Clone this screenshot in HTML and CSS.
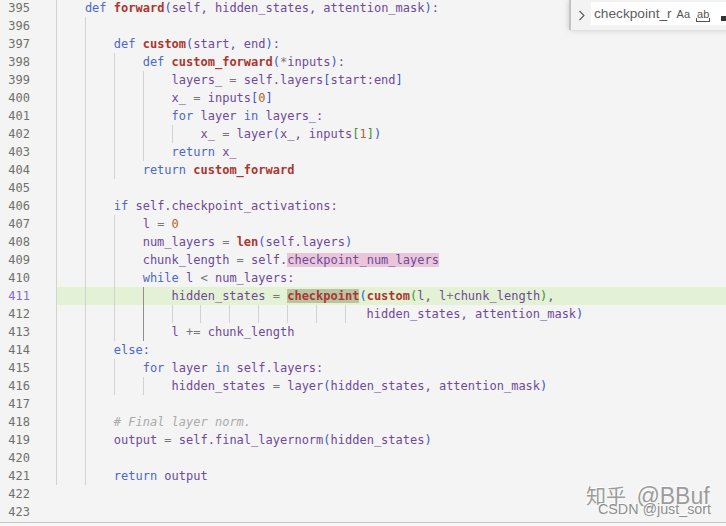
FILE: index.html
```html
<!DOCTYPE html>
<html lang="en">
<head>
<meta charset="utf-8">
<title>forward - editor</title>
<link rel="stylesheet" href="styles.css">
</head>
<body>
<div class="editor">
  <div class="lines">
    <div class="line"><span class="ln">395</span><span class="code"><i class="ig"></i><span class="k">def</span> <span class="f">forward</span><span class="b1">(</span>self, hidden_states, attention_mask<span class="b1">)</span>:</span></div>
    <div class="line"><span class="ln">396</span><span class="code"><i class="ig"></i><i class="ig"></i></span></div>
    <div class="line"><span class="ln">397</span><span class="code"><i class="ig"></i><i class="ig"></i><span class="k">def</span> <span class="f">custom</span><span class="b1">(</span>start, end<span class="b1">)</span>:</span></div>
    <div class="line"><span class="ln">398</span><span class="code"><i class="ig"></i><i class="ig"></i><i class="ig"></i><span class="k">def</span> <span class="f">custom_forward</span><span class="b1">(</span><span class="o">*</span>inputs<span class="b1">)</span>:</span></div>
    <div class="line"><span class="ln">399</span><span class="code"><i class="ig"></i><i class="ig"></i><i class="ig"></i><i class="ig"></i>layers_ <span class="o">=</span> self.layers<span class="b1">[</span>start:end<span class="b1">]</span></span></div>
    <div class="line"><span class="ln">400</span><span class="code"><i class="ig"></i><i class="ig"></i><i class="ig"></i><i class="ig"></i>x_ <span class="o">=</span> inputs<span class="b1">[</span><span class="n">0</span><span class="b1">]</span></span></div>
    <div class="line"><span class="ln">401</span><span class="code"><i class="ig"></i><i class="ig"></i><i class="ig"></i><i class="ig"></i><span class="k">for</span> layer <span class="k">in</span> layers_:</span></div>
    <div class="line"><span class="ln">402</span><span class="code"><i class="ig"></i><i class="ig"></i><i class="ig"></i><i class="ig"></i><i class="ig"></i>x_ <span class="o">=</span> layer<span class="b1">(</span>x_, inputs<span class="b2">[</span><span class="n">1</span><span class="b2">]</span><span class="b1">)</span></span></div>
    <div class="line"><span class="ln">403</span><span class="code"><i class="ig"></i><i class="ig"></i><i class="ig"></i><i class="ig"></i><span class="k">return</span> x_</span></div>
    <div class="line"><span class="ln">404</span><span class="code"><i class="ig"></i><i class="ig"></i><i class="ig"></i><span class="k">return</span> <span class="f">custom_forward</span></span></div>
    <div class="line"><span class="ln">405</span><span class="code"><i class="ig"></i><i class="ig"></i></span></div>
    <div class="line"><span class="ln">406</span><span class="code"><i class="ig"></i><i class="ig"></i><span class="k">if</span> self.checkpoint_activations:</span></div>
    <div class="line"><span class="ln">407</span><span class="code"><i class="ig"></i><i class="ig"></i><i class="ig"></i>l <span class="o">=</span> <span class="n">0</span></span></div>
    <div class="line"><span class="ln">408</span><span class="code"><i class="ig"></i><i class="ig"></i><i class="ig"></i>num_layers <span class="o">=</span> <span class="f">len</span><span class="b1">(</span>self.layers<span class="b1">)</span></span></div>
    <div class="line"><span class="ln">409</span><span class="code"><i class="ig"></i><i class="ig"></i><i class="ig"></i>chunk_length <span class="o">=</span> self.<span class="match">checkpoint_num_layers</span></span></div>
    <div class="line"><span class="ln">410</span><span class="code"><i class="ig"></i><i class="ig"></i><i class="ig"></i><span class="k">while</span> l <span class="o">&lt;</span> num_layers:</span></div>
    <div class="line cur"><span class="ln">411</span><span class="code"><i class="ig"></i><i class="ig"></i><i class="ig"></i><i class="ig act"></i>hidden_states <span class="o">=</span> <span class="f cur-match">checkpoint</span><span class="b1">(</span><span class="f">custom</span><span class="b2">(</span>l, l<span class="o">+</span>chunk_length<span class="b2">)</span>,</span></div>
    <div class="line"><span class="ln">412</span><span class="code"><i class="ig"></i><i class="ig"></i><i class="ig"></i><i class="ig act"></i><i class="ig"></i><i class="ig"></i><i class="ig"></i><i class="ig"></i><i class="ig"></i><i class="ig"></i><i class="ig ig3"></i>hidden_states, attention_mask<span class="b1">)</span></span></div>
    <div class="line"><span class="ln">413</span><span class="code"><i class="ig"></i><i class="ig"></i><i class="ig"></i><i class="ig act"></i>l <span class="o">+=</span> chunk_length</span></div>
    <div class="line"><span class="ln">414</span><span class="code"><i class="ig"></i><i class="ig"></i><span class="k">else</span>:</span></div>
    <div class="line"><span class="ln">415</span><span class="code"><i class="ig"></i><i class="ig"></i><i class="ig"></i><span class="k">for</span> layer <span class="k">in</span> self.layers:</span></div>
    <div class="line"><span class="ln">416</span><span class="code"><i class="ig"></i><i class="ig"></i><i class="ig"></i><i class="ig"></i>hidden_states <span class="o">=</span> layer<span class="b1">(</span>hidden_states, attention_mask<span class="b1">)</span></span></div>
    <div class="line"><span class="ln">417</span><span class="code"><i class="ig"></i><i class="ig"></i></span></div>
    <div class="line"><span class="ln">418</span><span class="code"><i class="ig"></i><i class="ig"></i><span class="c"># Final layer norm.</span></span></div>
    <div class="line"><span class="ln">419</span><span class="code"><i class="ig"></i><i class="ig"></i>output <span class="o">=</span> self.final_layernorm<span class="b1">(</span>hidden_states<span class="b1">)</span></span></div>
    <div class="line"><span class="ln">420</span><span class="code"><i class="ig"></i><i class="ig"></i></span></div>
    <div class="line"><span class="ln">421</span><span class="code"><i class="ig"></i><i class="ig"></i><span class="k">return</span> output</span></div>
    <div class="line"><span class="ln">422</span><span class="code"></span></div>
    <div class="line"><span class="ln">423</span><span class="code"></span></div>
  </div>

  <div class="find">
    <span class="toggle"><svg width="10" height="14" viewBox="0 0 10 14"><path d="M2.5 3 L7 7.5 L2.5 12" fill="none" stroke="#5a5a5a" stroke-width="1.1"/></svg></span>
    <div class="find-input">
      <span class="query">checkpoint_r</span>
      <span class="opt case">Aa</span>
      <span class="opt word">ab</span>
      <span class="opt regex"></span>
    </div>
  </div>

  <div class="wm wm-zh"><span class="wm-cjk">知乎</span> @BBuf</div>
  <div class="wm wm-csdn">CSDN @just_sort</div>
</div>
</body>
</html>
```

FILE: styles.css
```css
body {
  margin: 0;
  width: 726px;
  height: 526px;
  overflow: hidden;
  background: #f8f8f8;
}

.editor {
  position: relative;
  height: 522px;
  overflow: hidden;
  background: #f4f4f4;
  border-bottom: 1px solid #c6c6c6;
}

.lines {
  margin-top: -1px;
  font-family: "DejaVu Sans Mono", "Liberation Mono", monospace;
  font-size: 12px;
  line-height: 18px;
  color: #6f4a98;
}

.line {
  display: flex;
  height: 18px;
}

.ln {
  flex: none;
  width: 30px;
  margin-right: 26px;
  text-align: right;
  color: #6f706a;
}

.line.cur .ln {
  color: #8769cf;
}

.code {
  flex: 1;
  white-space: pre;
}

.line.cur .code {
  background: #e3f2d4;
}

.ig {
  display: inline-block;
  vertical-align: top;
  width: 4ch;
  height: 18px;
  box-sizing: border-box;
  border-left: 1px solid #d2d2d2;
}

.ig.ig3 {
  width: 3ch;
}

.ig.act {
  border-left-color: #8f8f8f;
}

.k { color: #4b69c6; }
.f { color: #aa3731; font-weight: bold; }
.o { color: #777777; }
.n { color: #b0652a; }
.c { color: #aaaaaa; font-style: italic; }
.b1 { color: #3459d0; }
.b2 { color: #3b9131; }

.match {
  background: #e9c6da;
}

.cur-match {
  background: #b8c4a2;
}

/* find widget */
.find {
  position: absolute;
  top: 0;
  left: 569px;
  right: -10px;
  height: 30px;
  display: flex;
  align-items: flex-start;
  background: #f3f3f3;
  border-left: 2px solid #c3c3c3;
  box-shadow: 0 0 6px rgba(0, 0, 0, 0.18);
  box-sizing: border-box;
}

.toggle {
  flex: none;
  width: 19px;
  height: 30px;
  display: flex;
  align-items: center;
  justify-content: center;
  padding-left: 1px;
}

.find-input {
  flex: 1;
  margin-top: 2px;
  height: 23px;
  background: #ffffff;
  display: flex;
  align-items: center;
  padding-left: 3px;
  font-family: "Liberation Sans", Arial, sans-serif;
  color: #5e5e5e;
}

.query {
  font-size: 13.7px;
}

.opt {
  font-size: 11px;
  color: #555;
}

.case {
  margin-left: 5px;
}

.word {
  position: relative;
  margin-left: 6px;
  padding: 0 1px;
  line-height: 12px;
}

.word::after {
  content: "";
  position: absolute;
  left: 0;
  right: 0;
  bottom: -2px;
  height: 3px;
  border: 1px solid #555;
  border-top: none;
}

.regex {
  flex: none;
  width: 5px;
  height: 5px;
  background: #333;
  margin-left: 11px;
  margin-top: 9px;
}

/* watermark */
.wm {
  position: absolute;
  font-family: "Liberation Sans", "Noto Sans CJK SC", sans-serif;
  color: #9c9c9c;
  text-shadow: -1px -1px 0 rgba(255, 255, 255, 0.9);
  white-space: nowrap;
}

.wm-zh {
  left: 586px;
  top: 484px;
  font-size: 23px;
  line-height: 23px;
}

.wm-cjk {
  font-family: "Noto Sans CJK SC", sans-serif;
  font-size: 20px;
  margin-right: 4px;
}

.wm-csdn {
  left: 598px;
  top: 502px;
  font-size: 14.3px;
  line-height: 14.3px;
  color: #8f8f8f;
}
```
